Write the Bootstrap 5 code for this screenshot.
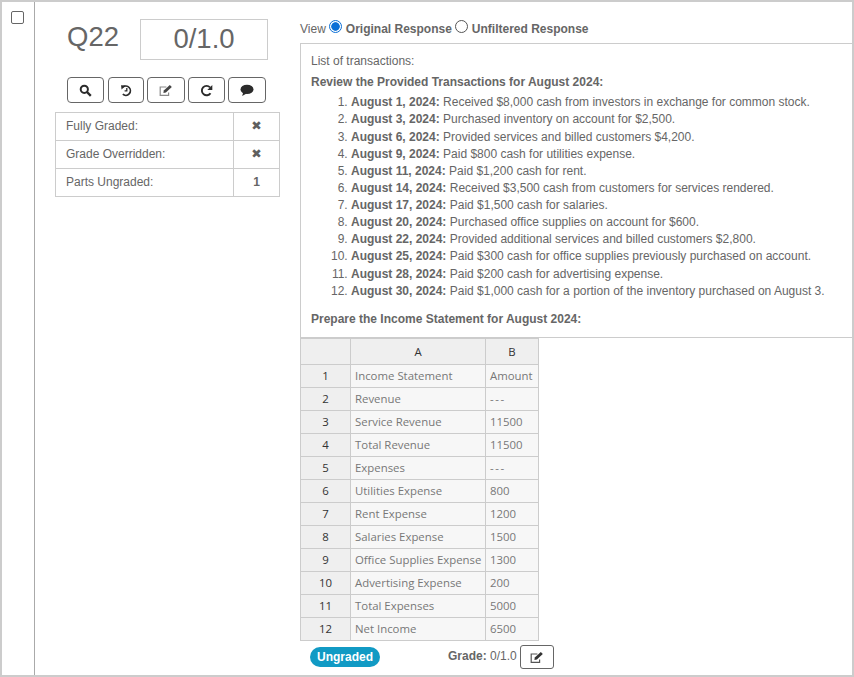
<!DOCTYPE html>
<html lang="en">
<head>
<meta charset="utf-8">
<title>Q22</title>
<link rel="stylesheet" href="https://cdn.jsdelivr.net/npm/bootstrap@5.3.0/dist/css/bootstrap.min.css">
<style>
html,body{margin:0;height:677px;overflow:hidden;background:#fff}
body{font-family:"Liberation Sans",Arial,sans-serif;font-size:12px;line-height:17.12px;color:#666}
.shell{height:677px;border:2px solid #ccc}
.chk-col{width:33px;border-right:1px solid #aaa;flex:none;padding:9px 0 0 9px}
.chk-box{width:13px;height:13px;border:1px solid #666;border-radius:2px;display:block}
.side-col{width:265px;flex:none;padding-left:20px}
.q-head{padding-top:17px;height:58px}
.q-name{font-size:27.5px;line-height:36px;color:#666;margin-left:12px;width:73px}
.q-score{width:128px;height:41px;border:1px solid #ccc;font-size:27.5px;line-height:37px;text-align:center;color:#666}
.tool-row{margin:17px 0 0 12px;gap:3px;height:26px}
.tool-btn{width:37px;height:26px;border:1px solid #666;border-radius:4px;background:#fff;display:flex;align-items:center;justify-content:center;padding:0;flex:none}
.tool-btn:nth-child(1){margin-right:1px}
.tool-btn:nth-child(2){width:36px}
.tool-btn:nth-child(3),.tool-btn:nth-child(5){width:38px}
.stat-tbl{width:225px;margin-top:9px;border-collapse:collapse;table-layout:fixed}
.stat-tbl td{border:1px solid #ccc;height:28px;padding:0 10px 2px;color:#666;line-height:16px}
.stat-tbl td+td{width:46px;padding:0 0 2px;text-align:center;font-weight:700}
.stat-tbl td.no-mark{font-family:"DejaVu Sans",sans-serif;font-size:12.5px;font-weight:400;color:#5f5f5f}
.main-col{flex:1;min-width:0}
.view-row{height:41px;padding-top:17px;font-size:12px;line-height:20px;display:flex;align-items:flex-start;white-space:nowrap}
.view-row b{color:#666}
.rdo{width:13px;height:13px;border:1px solid #555;border-radius:50%;display:inline-block;margin:1px 4px 0 3px;flex:none;background:#fff}
.rdo-on{border:1px solid #0b6fd6;background:radial-gradient(circle,#0b6fd6 0 3.9px,#fff 4.6px)}
.resp-box{height:295px;border:1px solid #ccc;border-right:0;padding:9px 10px 0 10px}
.resp-box p{margin:0 0 4px}
.resp-box p+p{margin-bottom:3px}
.resp-box ol{margin:0 0 11px;padding-left:40px}
.resp-box b{color:#666}
.sheet{border-collapse:collapse;font-family:"Open Sans","Noto Sans",sans-serif;font-size:11.4px;width:238px;table-layout:fixed}
.sheet td,.sheet th{border:1px solid #ccc;height:23px;padding:0 4px;font-weight:400;background:#f7f7f7;color:#777;white-space:nowrap;overflow:hidden;line-height:16px}
.sheet th{background:#efefef;color:#333;text-align:center;padding:0}
.sheet thead th{height:26px}
.sheet-c0{width:50px}
.sheet-c1{width:135px}
.sheet-c2{width:53px}
.sheet td.dash-cell{letter-spacing:1.6px}
.foot-row{height:28px;padding:4px 0 0 10px}
.state-pill{background:#119ac4;color:#fff;font-weight:700;border-radius:10px;width:70px;height:20px;line-height:20px;text-align:center;margin-top:2px}
.grade-txt{margin-left:68px;margin-top:3px;width:72px;white-space:nowrap}
.grade-btn{width:34px;height:24px;border:1px solid #666;border-radius:3px;background:#fff;display:flex;align-items:center;justify-content:center;padding:0}
</style>
</head>
<body>
<div class="shell d-flex">
  <div class="chk-col"><span class="chk-box"></span></div>
  <div class="side-col">
    <div class="q-head d-flex">
      <div class="q-name">Q22</div>
      <div class="q-score">0/1.0</div>
    </div>
    <div class="tool-row d-flex">
      <button class="tool-btn" aria-label="search"><svg width="13" height="13" viewBox="0 0 13 13" fill="none" stroke="#2b2b2b" stroke-width="2"><circle cx="5.3" cy="5.3" r="3.6"/><path d="M8 8 11.8 11.8" stroke-width="2.4"/></svg></button>
      <button class="tool-btn" aria-label="history"><svg width="13" height="13" viewBox="0 0 13 13" fill="none" stroke="#2b2b2b" stroke-width="1.7"><path d="M2.8 3.2A4.6 4.6 0 1 1 2.8 10.2"/><path d="M1 1.2 5.6 1.6 1.6 5.4Z" fill="#2b2b2b" stroke="none"/><path d="M6.8 4V6.9H4.6" stroke-width="1.3"/></svg></button>
      <button class="tool-btn" aria-label="edit"><svg width="14" height="13" viewBox="0 0 14 13" fill="none"><path d="M9.6 8.4v2.9H1.2V3H7.4" stroke="#8a8a8a" stroke-width="1.2"/><path d="M4.8 6.6 10.8 1l2 2L6.9 8.6 4.4 9.1Z" fill="#444"/></svg></button>
      <button class="tool-btn" aria-label="redo"><svg width="13" height="13" viewBox="0 0 13 13" fill="none" stroke="#2b2b2b" stroke-width="1.9"><path d="M10 3.4A4.7 4.7 0 1 0 10.5 9.2"/><path d="M12.3 1V6H7.3Z" fill="#2b2b2b" stroke="none"/></svg></button>
      <button class="tool-btn" aria-label="comment"><svg width="14" height="13" viewBox="0 0 14 13"><ellipse cx="7" cy="5.4" rx="6.5" ry="4.7" fill="#2b2b2b"/><path d="M3.2 8.2 2.2 12 6.6 9.4Z" fill="#2b2b2b"/></svg></button>
    </div>
    <table class="stat-tbl">
      <tr><td>Fully Graded:</td><td class="no-mark">&#10006;</td></tr>
      <tr><td>Grade Overridden:</td><td class="no-mark">&#10006;</td></tr>
      <tr><td>Parts Ungraded:</td><td>1</td></tr>
    </table>
  </div>
  <div class="main-col">
    <div class="view-row">View<span class="rdo rdo-on"></span><b>Original Response</b><span class="rdo"></span><b>Unfiltered Response</b></div>
    <div class="resp-box">
      <p>List of transactions:</p>
      <p><b>Review the Provided Transactions for August 2024:</b></p>
      <ol>
        <li><b>August 1, 2024:</b> Received $8,000 cash from investors in exchange for common stock.</li>
        <li><b>August 3, 2024:</b> Purchased inventory on account for $2,500.</li>
        <li><b>August 6, 2024:</b> Provided services and billed customers $4,200.</li>
        <li><b>August 9, 2024:</b> Paid $800 cash for utilities expense.</li>
        <li><b>August 11, 2024:</b> Paid $1,200 cash for rent.</li>
        <li><b>August 14, 2024:</b> Received $3,500 cash from customers for services rendered.</li>
        <li><b>August 17, 2024:</b> Paid $1,500 cash for salaries.</li>
        <li><b>August 20, 2024:</b> Purchased office supplies on account for $600.</li>
        <li><b>August 22, 2024:</b> Provided additional services and billed customers $2,800.</li>
        <li><b>August 25, 2024:</b> Paid $300 cash for office supplies previously purchased on account.</li>
        <li><b>August 28, 2024:</b> Paid $200 cash for advertising expense.</li>
        <li><b>August 30, 2024:</b> Paid $1,000 cash for a portion of the inventory purchased on August 3.</li>
      </ol>
      <p><b>Prepare the Income Statement for August 2024:</b></p>
    </div>
    <table class="sheet">
      <colgroup><col class="sheet-c0"><col class="sheet-c1"><col class="sheet-c2"></colgroup>
      <thead><tr><th></th><th>A</th><th>B</th></tr></thead>
      <tbody>
        <tr><th>1</th><td>Income Statement</td><td>Amount</td></tr>
        <tr><th>2</th><td>Revenue</td><td class="dash-cell">---</td></tr>
        <tr><th>3</th><td>Service Revenue</td><td>11500</td></tr>
        <tr><th>4</th><td>Total Revenue</td><td>11500</td></tr>
        <tr><th>5</th><td>Expenses</td><td class="dash-cell">---</td></tr>
        <tr><th>6</th><td>Utilities Expense</td><td>800</td></tr>
        <tr><th>7</th><td>Rent Expense</td><td>1200</td></tr>
        <tr><th>8</th><td>Salaries Expense</td><td>1500</td></tr>
        <tr><th>9</th><td>Office Supplies Expense</td><td>1300</td></tr>
        <tr><th>10</th><td>Advertising Expense</td><td>200</td></tr>
        <tr><th>11</th><td>Total Expenses</td><td>5000</td></tr>
        <tr><th>12</th><td>Net Income</td><td>6500</td></tr>
      </tbody>
    </table>
    <div class="foot-row d-flex">
      <div class="state-pill">Ungraded</div>
      <div class="grade-txt"><b>Grade:</b> 0/1.0</div>
      <button class="grade-btn" aria-label="edit grade"><svg width="14" height="13" viewBox="0 0 14 13" fill="none"><path d="M9.6 8.4v2.9H1.2V3H7.4" stroke="#555" stroke-width="1.2"/><path d="M4.8 6.6 10.8 1l2 2L6.9 8.6 4.4 9.1Z" fill="#333"/></svg></button>
    </div>
  </div>
</div>
<script src="https://cdn.jsdelivr.net/npm/bootstrap@5.3.0/dist/js/bootstrap.bundle.min.js"></script>
</body>
</html>
